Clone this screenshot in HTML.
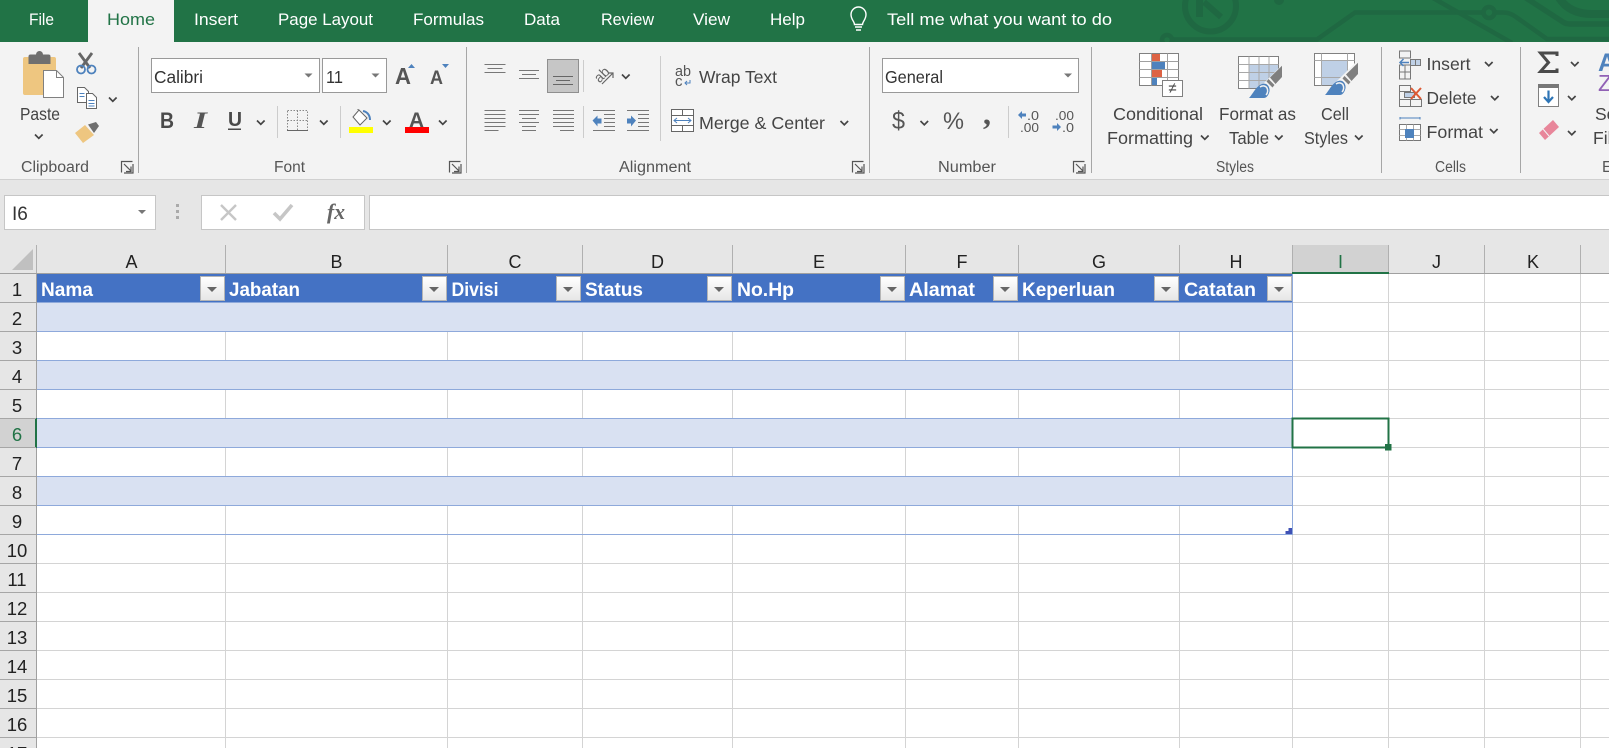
<!DOCTYPE html>
<html><head><meta charset="utf-8"><title>Excel</title>
<style>
html,body{margin:0;padding:0;background:#fff;overflow:hidden;width:1609px;height:748px}
svg{display:block}
text{font-family:"Liberation Sans",sans-serif;white-space:pre}
.t{font-size:17px;fill:#fff}
.r{font-size:17.500px;fill:#444}
.l{font-size:15.500px;fill:#555}
.h{font-size:18px;fill:#222;text-anchor:middle}
.n{font-size:18.500px;fill:#222;text-anchor:middle}
.b{font-size:19.500px;font-weight:bold;fill:#fff}
.ln{stroke:#666;stroke-width:1;fill:none}
.lg{stroke:#777;stroke-width:1;fill:none}
.sep{stroke:#ccc;stroke-width:1}
.gs{stroke:#a6a6a6;stroke-width:1}
</style></head><body>
<svg width="1609" height="748" viewBox="0 0 1609 748" xmlns="http://www.w3.org/2000/svg" shape-rendering="geometricPrecision">
<defs>
<path id="ch" d="M0 0l3.800 3.800 3.800-3.800" fill="none" stroke="#444" stroke-width="1.700"/>
<path id="tri" d="M0 0h8l-4 4z" fill="#777"/>
<g id="lau"><path d="M.5 11.500v-11h11M3 3l7 7M10 5.500v5h-5M12 3v9H3" fill="none" stroke="#555" stroke-width="1.200"/></g>
<g id="flt"><rect x=".5" y=".5" width="24" height="24" fill="url(#fg)" stroke="#b5b5b5"/><path d="M7 11h10l-5 5z" fill="#666"/></g>
<linearGradient id="fg" x1="0" y1="0" x2="0" y2="1"><stop offset="0" stop-color="#fff"/><stop offset="1" stop-color="#e6e6e6"/></linearGradient>
<g id="brush"><path d="M44 9.700V21L37.500 28 32 21.500z" fill="#7f7f7f"/><path d="M30.500 23l6 6-2 2.500-6-6z" fill="#7f7f7f"/><path d="M11 42C15 38 18 30 24 28C30 26 33 33 31 37C30 40 28 42 26 42Z" fill="#4e82bd"/><path d="M22 31c3-2 6-1 7 1 1 2 1 5-1 7" fill="none" stroke="#f2f2f2" stroke-width="1.500"/></g>
</defs>

<!-- title bar -->
<rect width="1609" height="42" fill="#217346"/>
<g fill="none" stroke="#1f6842" stroke-width="4.500">
<circle cx="1210.500" cy="6" r="25.500" stroke-width="6"/>
<path d="M1199.500 -2v19" stroke-width="7"/><path d="M1204 2l17 15" stroke-width="6"/>
<path d="M1171 39.500H1317L1355 12.500H1483M1495 12.500H1503Q1510 12.500 1516 17L1547 39H1609"/>
<circle cx="1489" cy="12.500" r="5.500"/>
<circle cx="1167" cy="40" r="5"/>
<path d="M1433 -2L1512 43"/>
<path d="M1526 -2L1563 22Q1566 24 1570 24H1609" stroke-width="5.500"/>
<path d="M1558 -4Q1568 14 1592 14H1609" stroke-width="8"/>
</g>
<circle cx="1279" cy="0" r="5" fill="#1f6842"/>
<rect x="88" width="86" height="42" fill="#f3f3f3"/>
<text class="t" x="29" y="25" textLength="25" lengthAdjust="spacingAndGlyphs">File</text>
<text class="t" x="107" y="25" textLength="48" lengthAdjust="spacingAndGlyphs" style="fill:#217346">Home</text>
<text class="t" x="194" y="25" textLength="44" lengthAdjust="spacingAndGlyphs">Insert</text>
<text class="t" x="278" y="25" textLength="95" lengthAdjust="spacingAndGlyphs">Page Layout</text>
<text class="t" x="413" y="25" textLength="71" lengthAdjust="spacingAndGlyphs">Formulas</text>
<text class="t" x="524" y="25" textLength="36" lengthAdjust="spacingAndGlyphs">Data</text>
<text class="t" x="601" y="25" textLength="53" lengthAdjust="spacingAndGlyphs">Review</text>
<text class="t" x="693" y="25" textLength="37" lengthAdjust="spacingAndGlyphs">View</text>
<text class="t" x="770" y="25" textLength="35" lengthAdjust="spacingAndGlyphs">Help</text>
<path d="M854.500 24.500c0-3-3.500-5-3.500-10a7.500 7.500 0 0 1 15 0c0 5-3.500 7-3.500 10zM855 27h7M856 30h5" fill="none" stroke="#fff" stroke-width="1.400"/>
<text class="t" x="887" y="25" textLength="225" lengthAdjust="spacingAndGlyphs">Tell me what you want to do</text>

<!-- ribbon -->
<rect y="42" width="1609" height="137" fill="#f3f3f3"/>
<rect y="179" width="1609" height="1" fill="#d0d0d0"/>
<rect y="180" width="1609" height="65" fill="#e6e6e6"/>
<g class="gs"><path d="M138.500 47v126M466.500 47v126M869.500 47v126M1091.500 47v126M1381.500 47v126M1520.500 47v126"/></g>

<!-- clipboard -->
<rect x="23" y="57" width="33" height="38" rx="2" fill="#eec680"/>
<path d="M36 54.500a3.500 3.500 0 0 1 7 0h5.500a2 2 0 0 1 2 2V64h-22v-7.500a2 2 0 0 1 2-2z" fill="#6f6f6f"/>
<path d="M43.500 70.500h13l7 7v20h-20z" fill="#fff" stroke="#808080"/><path d="M56.500 70.500v7h7" fill="none" stroke="#808080"/>
<text class="r" x="20" y="120" textLength="40" lengthAdjust="spacingAndGlyphs">Paste</text>
<use href="#ch" x="35" y="134.500"/>
<path d="M79 53l11 15M92 53L81 68" stroke="#666" stroke-width="2.800" fill="none"/>
<circle cx="81" cy="69.500" r="4" fill="none" stroke="#4e82bd" stroke-width="1.800"/><circle cx="91.500" cy="69.500" r="4" fill="none" stroke="#4e82bd" stroke-width="1.800"/>
<path d="M77.500 87.500h7l4 4v11h-11z" fill="#fff" stroke="#666"/>
<path d="M86.500 93.500h6l4 4v11h-10z" fill="#fff" stroke="#666"/>
<path d="M79.500 93.500h5M79.500 96.500h5M88.500 100.500h6M88.500 103.500h6M88.500 106h6" stroke="#4e82bd"/>
<use href="#ch" x="109" y="97.500"/>
<path d="M75 133L85 125L94 135L83 143Z" fill="#eec680"/><path d="M88 124.500L96 122L99 126L94 133Z" fill="#6f6f6f"/>
<text class="l" x="21" y="172" textLength="68" lengthAdjust="spacingAndGlyphs">Clipboard</text>
<use href="#lau" x="121" y="161"/>

<!-- font -->
<rect x="151.500" y="58.500" width="168" height="34" fill="#fff" stroke="#999"/>
<rect x="322.500" y="58.500" width="64" height="34" fill="#fff" stroke="#999"/>
<text x="154" y="83" style="font-size:17.500px" fill="#333" textLength="49" lengthAdjust="spacingAndGlyphs">Calibri</text>
<text x="326" y="83" style="font-size:17.500px" fill="#333" textLength="17" lengthAdjust="spacingAndGlyphs">11</text>
<use href="#tri" x="304.500" y="73.500"/><use href="#tri" x="371.500" y="73.500"/>
<text x="395" y="84" style="font-size:23px;font-weight:bold" fill="#555" textLength="16" lengthAdjust="spacingAndGlyphs">A</text>
<path d="M408 68l3.500-4 3.500 4z" fill="#4e82bd"/>
<text x="430" y="84" style="font-size:19px;font-weight:bold" fill="#555" textLength="13" lengthAdjust="spacingAndGlyphs">A</text>
<path d="M442 64h7l-3.500 4z" fill="#4e82bd"/>
<text x="160" y="128" style="font-size:22px;font-weight:bold" fill="#4a4a4a" textLength="14" lengthAdjust="spacingAndGlyphs">B</text>
<text x="194" y="128" style="font-size:23px;font-style:italic;font-weight:bold;font-family:'Liberation Serif',serif" fill="#555" textLength="13" lengthAdjust="spacingAndGlyphs">I</text>
<text x="228" y="126" style="font-size:20px;font-weight:bold" fill="#4a4a4a" textLength="14" lengthAdjust="spacingAndGlyphs">U</text>
<rect x="228" y="128.500" width="13" height="1.500" fill="#4a4a4a"/>
<use href="#ch" x="257" y="120.500"/>
<path class="sep" d="M277.500 106v32M340.500 106v32"/>
<path d="M287.500 110.500h20v20h-20zM297.500 110.500v20M287.500 120.500h20" fill="none" stroke="#888" stroke-dasharray="1.500 1.500"/><path d="M287 130.500h21" stroke="#666"/>
<use href="#ch" x="320" y="120.500"/>
<path d="M353 117l6-7 8 8-7 7z" fill="#fff" stroke="#666"/><path d="M358 110v-1" stroke="#666"/><path d="M363 111c5 1 7 5 7 9" fill="none" stroke="#4e82bd" stroke-width="2"/>
<rect x="349" y="127" width="24" height="6" fill="#ff0"/>
<use href="#ch" x="383" y="120.500"/>
<text x="409" y="127" style="font-size:21px;font-weight:bold" fill="#555" textLength="15" lengthAdjust="spacingAndGlyphs">A</text>
<rect x="405" y="127" width="24" height="6" fill="#f00"/>
<use href="#ch" x="439" y="120.500"/>
<text class="l" x="274" y="172" textLength="31" lengthAdjust="spacingAndGlyphs">Font</text>
<use href="#lau" x="449" y="161"/>

<!-- alignment -->
<path class="lg" d="M484.500 64.500h21M487.500 68.500h15M484.500 72.500h21"/>
<path class="lg" d="M519 70.500h20M522 74.500h14M519 78.500h20"/>
<rect x="547.500" y="59.500" width="31" height="33" fill="#c6c6c6" stroke="#8f8f8f"/>
<path class="lg" d="M553 76.500h20M556 80.500h14M553 84.500h20" style="stroke:#666"/>
<path class="sep" d="M583.500 60v32M583.500 106v32M660.500 56v85"/>
<text transform="translate(605 78) rotate(-45)" style="font-size:14px" fill="#666" text-anchor="middle">ab</text>
<path d="M602 84l11-11m-5 0h5v5" fill="none" stroke="#666" stroke-width="1.200"/>
<use href="#ch" x="622" y="74.500"/>
<g class="lg"><path d="M484.500 110.500h21M484.500 114.500h21M484.500 118.500h21M484.500 122.500h21M484.500 126.500h21M484.500 130.500h14"/>
<path d="M519 110.500h20M519 114.500h20M522 118.500h14M519 122.500h20M522 126.500h14M522 130.500h14"/>
<path d="M553 110.500h21M553 114.500h21M553 118.500h21M553 122.500h21M553 126.500h21M560 130.500h14"/>
<path d="M593 110.500h22M604 114.500h11M604 118.500h11M604 122.500h11M604 126.500h11M593 130.500h22"/>
<path d="M627 110.500h22M638 114.500h11M638 118.500h11M638 122.500h11M638 126.500h11M627 130.500h22"/></g>
<path d="M592.500 120.500l5-5v3h4v5h-4v3z" fill="#4e82bd"/><path d="M636 120.500l-5-5v3h-4v5h4v3z" fill="#4e82bd"/>
<text x="675" y="76" style="font-size:15px" fill="#555" textLength="16" lengthAdjust="spacingAndGlyphs">ab</text>
<text x="675" y="86" style="font-size:15px" fill="#555">c</text>
<path d="M690 80v3h-5m2-2l-2 2 2 2" fill="none" stroke="#4e82bd"/>
<text class="r" x="699" y="83" textLength="78" lengthAdjust="spacingAndGlyphs">Wrap Text</text>
<rect x="671.500" y="109.500" width="22" height="22" fill="#fff" stroke="#666"/>
<path d="M671.500 115.500h22M671.500 125.500h22M682.500 109.500v6M682.500 125.500v6" stroke="#666" fill="none"/>
<path d="M674 120.500h17m-14-2.500l-3 2.500 3 2.500m11-5l3 2.500-3 2.500" stroke="#4e82bd" fill="none"/>
<text class="r" x="699" y="129" textLength="126" lengthAdjust="spacingAndGlyphs">Merge &amp; Center</text>
<use href="#ch" x="840.500" y="121"/>
<text class="l" x="619" y="172" textLength="72" lengthAdjust="spacingAndGlyphs">Alignment</text>
<use href="#lau" x="852" y="161"/>

<!-- number -->
<rect x="882.500" y="58.500" width="196" height="34" fill="#fff" stroke="#999"/>
<text x="885" y="83" style="font-size:17.500px" fill="#333" textLength="58" lengthAdjust="spacingAndGlyphs">General</text>
<use href="#tri" x="1064" y="73.500"/>
<text x="892" y="129" style="font-size:25px" fill="#555" textLength="13" lengthAdjust="spacingAndGlyphs">$</text>
<use href="#ch" x="920.500" y="121"/>
<text x="943" y="129" style="font-size:24px" fill="#555" textLength="21" lengthAdjust="spacingAndGlyphs">%</text>
<text x="983" y="124" style="font-size:32px;font-weight:bold;font-family:'Liberation Serif',serif" fill="#555">,</text>
<path class="sep" d="M1008.500 106v32"/>
<path d="M1018 115l4-4v2.500h4v3h-4v2.500z" fill="#4e82bd"/>
<text x="1027" y="120" style="font-size:12.500px" fill="#555" textLength="12" lengthAdjust="spacingAndGlyphs">.0</text>
<text x="1020" y="132" style="font-size:12.500px" fill="#555" textLength="19" lengthAdjust="spacingAndGlyphs">.00</text>
<text x="1055" y="120" style="font-size:12.500px" fill="#555" textLength="19" lengthAdjust="spacingAndGlyphs">.00</text>
<path d="M1061 127l-4-4v2.500h-4.500v3h4.500v2.500z" fill="#4e82bd"/>
<text x="1062" y="132" style="font-size:12.500px" fill="#555" textLength="12" lengthAdjust="spacingAndGlyphs">.0</text>
<text class="l" x="938" y="172" textLength="58" lengthAdjust="spacingAndGlyphs">Number</text>
<use href="#lau" x="1073" y="161"/>

<!-- styles -->
<rect x="1139.500" y="53.500" width="39" height="32" fill="#fff" stroke="#808080"/>
<path d="M1139.500 61.500h39M1139.500 69.500h39M1139.500 77.500h39M1151.500 53.500v32M1167.500 53.500v32" stroke="#a0a0a0" fill="none"/>
<rect x="1152" y="54" width="8" height="7" fill="#dd6344"/><rect x="1152" y="62" width="13" height="7" fill="#4e82bd"/><rect x="1152" y="70" width="10" height="7" fill="#dd6344"/><rect x="1152" y="78" width="5" height="7" fill="#4e82bd"/>
<rect x="1162.500" y="80.500" width="20" height="16" fill="#fff" stroke="#808080"/>
<text x="1172.500" y="93" style="font-size:15px" fill="#444" text-anchor="middle">≠</text>
<text class="r" x="1113" y="120" textLength="90" lengthAdjust="spacingAndGlyphs">Conditional</text>
<text class="r" x="1107" y="144" textLength="86" lengthAdjust="spacingAndGlyphs">Formatting</text>
<use href="#ch" x="1201" y="135.500"/>

<rect x="1238.500" y="56.500" width="40" height="32" fill="#fff" stroke="#808080"/>
<rect x="1249" y="64" width="29" height="24" fill="#bfd0e6"/>
<path d="M1238.500 64.500h40M1238.500 72.500h40M1238.500 80.500h40M1249 56.500v32M1259 56.500v32M1269 56.500v32" stroke="#a8a8a8" fill="none"/>
<path d="M1284 63L1248 99H1284z" fill="#f3f3f3"/>
<use href="#brush" x="1238" y="56"/>
<text class="r" x="1219" y="120" textLength="77" lengthAdjust="spacingAndGlyphs">Format as</text>
<text class="r" x="1229" y="144" textLength="40" lengthAdjust="spacingAndGlyphs">Table</text>
<use href="#ch" x="1275" y="135.500"/>

<rect x="1314.500" y="53.500" width="40" height="32" fill="#fff" stroke="#808080"/>
<rect x="1321" y="60" width="27" height="25" fill="#bfd0e6"/>
<path d="M1314.500 60.500h40M1314.500 77.500h40M1321.500 53.500v32M1347.500 53.500v32" stroke="#a8a8a8" fill="none"/>
<path d="M1360 58L1322 96H1360z" fill="#f3f3f3"/>
<use href="#brush" x="1314" y="53"/>
<text class="r" x="1321" y="120" textLength="28" lengthAdjust="spacingAndGlyphs">Cell</text>
<text class="r" x="1304" y="144" textLength="44" lengthAdjust="spacingAndGlyphs">Styles</text>
<use href="#ch" x="1355" y="135.500"/>
<text class="l" x="1216" y="172" textLength="38" lengthAdjust="spacingAndGlyphs">Styles</text>

<!-- cells -->
<path d="M1399.500 51.500h11v7h-11zM1399.500 65.500h11v7h-11zM1399.500 72.500h11v7h-11zM1405 65.500v14" fill="none" stroke="#777" transform="translate(0 -.5)"/>
<path d="M1410.500 59.500h10v6h-10z" fill="#bfd0e6" stroke="#777"/><path d="M1415.500 59.500v6" stroke="#777"/>
<path d="M1409 62.500h-9m3.500-3.500l-3.500 3.500 3.500 3.500" fill="none" stroke="#4e82bd" stroke-width="1.500"/>
<text class="r" x="1426.500" y="70" textLength="44" lengthAdjust="spacingAndGlyphs">Insert</text>
<use href="#ch" x="1485" y="62"/>
<path d="M1399.500 85.500h11v6h-11zM1399.500 99.500h22v7h-22zM1410.500 99.500v7M1399.500 91.500v8" fill="none" stroke="#777"/>
<path d="M1404.500 92.500h10v5h-10z" fill="#bfd0e6" stroke="#777"/>
<path d="M1411 88l10 11M1421 88l-10 11" stroke="#dd5a35" stroke-width="2"/>
<text class="r" x="1426.500" y="104" textLength="50" lengthAdjust="spacingAndGlyphs">Delete</text>
<use href="#ch" x="1491" y="96"/>
<path d="M1400 119.500v-2.500m0 1h20m0-1v2.500" stroke="#4e82bd" fill="none"/>
<rect x="1399.500" y="124.500" width="21" height="16" fill="#fff" stroke="#777"/>
<path d="M1399.500 129.500h21M1399.500 135.500h21M1406.500 124.500v16M1413.500 124.500v16" stroke="#aaa" fill="none"/>
<rect x="1405" y="129" width="9" height="9" fill="#4e82bd"/>
<text class="r" x="1426.500" y="138" textLength="56.500" lengthAdjust="spacingAndGlyphs">Format</text>
<use href="#ch" x="1490" y="129"/>
<text class="l" x="1435" y="172" textLength="31" lengthAdjust="spacingAndGlyphs">Cells</text>

<!-- editing -->
<path d="M1557 56v-3h-16.500l8 9.500-8 9h16.500v-3" fill="none" stroke="#4a4a4a" stroke-width="3"/>
<use href="#ch" x="1571" y="62"/>
<rect x="1538.500" y="84.500" width="20" height="22" fill="#fff" stroke="#808080"/><rect x="1538" y="84" width="21" height="4" fill="#777"/>
<path d="M1548.500 90.500v11M1544 97l4.500 5 4.500-5" fill="none" stroke="#2e75b6" stroke-width="2.200"/>
<use href="#ch" x="1568" y="96"/>
<path d="M1539 133l14-13 6 7-14 13z" fill="#e8869a"/><path d="M1543 129l6 7" stroke="#f3f3f3"/>
<use href="#ch" x="1568" y="131"/>
<text x="1598" y="71" style="font-size:25px;font-weight:bold" fill="#4e82bd">A</text>
<text x="1598" y="91" style="font-size:23px" fill="#9161b5">Z</text>
<text class="r" x="1595" y="120">So</text>
<text class="r" x="1593" y="144">Fil</text>
<text class="l" x="1602" y="172">E</text>

<!-- formula bar -->
<rect x="4.500" y="195.500" width="151" height="34" fill="#fff" stroke="#c6c6c6"/>
<text x="12" y="220" style="font-size:19px" fill="#333">I6</text>
<use href="#tri" x="138" y="210"/>
<rect x="176" y="204" width="3" height="3" fill="#aaa"/><rect x="176" y="210" width="3" height="3" fill="#aaa"/><rect x="176" y="216" width="3" height="3" fill="#aaa"/>
<rect x="201.500" y="195.500" width="163" height="34" fill="#fff" stroke="#c6c6c6"/>
<path d="M221 205l15 15M236 205l-15 15" stroke="#c6c6c6" stroke-width="2.400"/>
<path d="M274 213l6 6 12-14" fill="none" stroke="#c6c6c6" stroke-width="3.600"/>
<text x="327" y="219" style="font-size:22px;font-style:italic;font-weight:bold;font-family:'Liberation Serif',serif" fill="#666" textLength="18" lengthAdjust="spacingAndGlyphs">fx</text>
<rect x="369.500" y="195.500" width="1240" height="34" fill="#fff" stroke="#c6c6c6"/>

<!-- sheet -->
<rect y="245" width="1609" height="503" fill="#fff"/>
<rect y="245" width="1609" height="29" fill="#e6e6e6"/>
<rect y="245" width="36" height="503" fill="#e6e6e6"/>
<path d="M33 249v21H12z" fill="#c0c0c0"/>

<!-- grid -->
<g fill="#d4d4d4">
<rect x="36" y="302" width="1573" height="1"/><rect x="36" y="331" width="1573" height="1"/><rect x="36" y="360" width="1573" height="1"/><rect x="36" y="389" width="1573" height="1"/><rect x="36" y="418" width="1573" height="1"/><rect x="36" y="447" width="1573" height="1"/><rect x="36" y="476" width="1573" height="1"/><rect x="36" y="505" width="1573" height="1"/><rect x="36" y="534" width="1573" height="1"/><rect x="36" y="563" width="1573" height="1"/><rect x="36" y="592" width="1573" height="1"/><rect x="36" y="621" width="1573" height="1"/><rect x="36" y="650" width="1573" height="1"/><rect x="36" y="679" width="1573" height="1"/><rect x="36" y="708" width="1573" height="1"/><rect x="36" y="737" width="1573" height="1"/>
<rect x="225" y="274" width="1" height="474"/><rect x="447" y="274" width="1" height="474"/><rect x="582" y="274" width="1" height="474"/><rect x="732" y="274" width="1" height="474"/><rect x="905" y="274" width="1" height="474"/><rect x="1018" y="274" width="1" height="474"/><rect x="1179" y="274" width="1" height="474"/><rect x="1292" y="274" width="1" height="474"/><rect x="1388" y="274" width="1" height="474"/><rect x="1484" y="274" width="1" height="474"/><rect x="1580" y="274" width="1" height="474"/>
</g>

<!-- table -->
<rect x="37" y="274" width="1255" height="28" fill="#4472c4"/>
<g fill="#d9e1f2"><rect x="37" y="303" width="1255" height="28"/><rect x="37" y="361" width="1255" height="28"/><rect x="37" y="419" width="1255" height="28"/><rect x="37" y="477" width="1255" height="28"/></g>
<g fill="#8ea9db"><rect x="37" y="302" width="1256" height="1"/><rect x="37" y="331" width="1256" height="1"/><rect x="37" y="360" width="1256" height="1"/><rect x="37" y="389" width="1256" height="1"/><rect x="37" y="418" width="1256" height="1"/><rect x="37" y="447" width="1256" height="1"/><rect x="37" y="476" width="1256" height="1"/><rect x="37" y="505" width="1256" height="1"/><rect x="37" y="534" width="1256" height="1"/><rect x="1292" y="274" width="1" height="261"/></g>
<path d="M1292 528v6h-6.500v-3h3v-3z" fill="#3f51b5"/>
<text class="b" x="41" y="296" textLength="52" lengthAdjust="spacingAndGlyphs">Nama</text>
<text class="b" x="229" y="296" textLength="71" lengthAdjust="spacingAndGlyphs">Jabatan</text>
<text class="b" x="451.500" y="296" textLength="47" lengthAdjust="spacingAndGlyphs">Divisi</text>
<text class="b" x="585" y="296" textLength="58" lengthAdjust="spacingAndGlyphs">Status</text>
<text class="b" x="737" y="296" textLength="57" lengthAdjust="spacingAndGlyphs">No.Hp</text>
<text class="b" x="909" y="296" textLength="66" lengthAdjust="spacingAndGlyphs">Alamat</text>
<text class="b" x="1022" y="296" textLength="93" lengthAdjust="spacingAndGlyphs">Keperluan</text>
<text class="b" x="1184" y="296" textLength="72" lengthAdjust="spacingAndGlyphs">Catatan</text>
<use href="#flt" x="200" y="276"/><use href="#flt" x="422" y="276"/><use href="#flt" x="556" y="276"/><use href="#flt" x="707" y="276"/><use href="#flt" x="880" y="276"/><use href="#flt" x="993" y="276"/><use href="#flt" x="1154" y="276"/><use href="#flt" x="1267" y="276"/>

<!-- column headers -->
<rect x="1293" y="245" width="96" height="27" fill="#d2d2d2"/>
<g fill="#b0b0b0"><rect x="36" y="245" width="1" height="29"/><rect x="225" y="245" width="1" height="29"/><rect x="447" y="245" width="1" height="29"/><rect x="582" y="245" width="1" height="29"/><rect x="732" y="245" width="1" height="29"/><rect x="905" y="245" width="1" height="29"/><rect x="1018" y="245" width="1" height="29"/><rect x="1179" y="245" width="1" height="29"/><rect x="1292" y="245" width="1" height="29"/><rect x="1388" y="245" width="1" height="29"/><rect x="1484" y="245" width="1" height="29"/><rect x="1580" y="245" width="1" height="29"/></g>
<rect x="0" y="273" width="1609" height="1" fill="#a0a0a0"/>
<rect x="1292" y="272" width="97" height="2" fill="#217346"/>
<text class="h" x="131.500" y="268">A</text><text class="h" x="336.500" y="268">B</text><text class="h" x="515" y="268">C</text><text class="h" x="657.500" y="268">D</text><text class="h" x="819" y="268">E</text><text class="h" x="962" y="268">F</text><text class="h" x="1099" y="268">G</text><text class="h" x="1236" y="268">H</text>
<text class="h" x="1340.500" y="268" style="fill:#217346">I</text><text class="h" x="1436.500" y="268">J</text><text class="h" x="1533" y="268">K</text>

<!-- row headers -->
<rect x="0" y="419" width="36" height="28" fill="#d2d2d2"/>
<rect x="36" y="274" width="1" height="474" fill="#a0a0a0"/>
<rect x="35" y="418" width="2" height="30" fill="#217346"/>
<g fill="#a6a6a6"><rect y="302" width="36" height="1"/><rect y="331" width="36" height="1"/><rect y="360" width="36" height="1"/><rect y="389" width="36" height="1"/><rect y="418" width="36" height="1"/><rect y="447" width="36" height="1"/><rect y="476" width="36" height="1"/><rect y="505" width="36" height="1"/><rect y="534" width="36" height="1"/><rect y="563" width="36" height="1"/><rect y="592" width="36" height="1"/><rect y="621" width="36" height="1"/><rect y="650" width="36" height="1"/><rect y="679" width="36" height="1"/><rect y="708" width="36" height="1"/><rect y="737" width="36" height="1"/></g>
<text class="n" x="17" y="296">1</text><text class="n" x="17" y="325">2</text><text class="n" x="17" y="354">3</text><text class="n" x="17" y="383">4</text><text class="n" x="17" y="412">5</text><text class="n" x="17" y="441" style="fill:#217346">6</text><text class="n" x="17" y="470">7</text><text class="n" x="17" y="499">8</text><text class="n" x="17" y="528">9</text><text class="n" x="17" y="557">10</text><text class="n" x="17" y="586">11</text><text class="n" x="17" y="615">12</text><text class="n" x="17" y="644">13</text><text class="n" x="17" y="673">14</text><text class="n" x="17" y="702">15</text><text class="n" x="17" y="731">16</text><text class="n" x="17" y="760">17</text>

<!-- selection -->
<rect x="1292.500" y="418.500" width="96" height="29" fill="#fff" stroke="#217346" stroke-width="2"/>
<rect x="1385" y="444" width="6.500" height="6.500" fill="#217346"/>
</svg>
</body></html>
